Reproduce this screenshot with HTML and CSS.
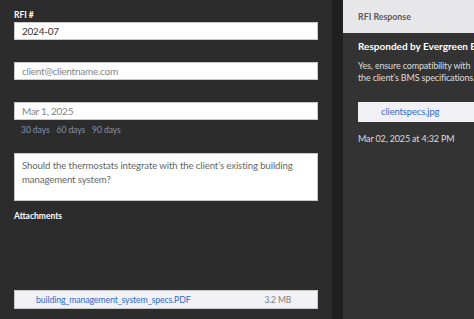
FILE: index.html
```html
<!DOCTYPE html>
<html lang="en">
<head>
  <meta charset="UTF-8" />
  <meta name="viewport" content="width=device-width, initial-scale=1.0" />
  <title>RFI</title>
  <link rel="stylesheet" href="styles.css">
</head>
<body>

  <!-- RFI form -->
  <div class="form-panel">
    <div class="label">RFI #</div>
    <div class="field">2024-07</div>

    <div class="field placeholder gap">client@clientname.com</div>

    <div class="field placeholder gap">Mar 1, 2025</div>
    <div class="days">
      <a>30 days</a>
      <a>60 days</a>
      <a>90 days</a>
    </div>

    <div class="textarea">Should the thermostats integrate with the client’s existing building management system?</div>

    <div class="label attach-label">Attachments</div>

    <div class="file-row">
      <a class="file-link">building_management_system_specs.PDF</a>
      <span class="file-size">3.2 MB</span>
    </div>
  </div>

  <div class="divider"></div>

  <!-- Response -->
  <div class="response-panel">
    <div class="response-head">RFI Response</div>
    <div class="response-body">
      <div class="responder">Responded by Evergreen Electrical</div>
      <p class="answer">Yes, ensure compatibility with<br>the client’s BMS specifications.</p>
      <div class="resp-file"><a>clientspecs.jpg</a></div>
      <div class="stamp">Mar 02, 2025 at 4:32 PM</div>
    </div>
  </div>

</body>
</html>
```

FILE: styles.css
```css
body {
  margin: 0;
  display: flex;
  height: 319px;
  overflow: hidden;
  background: #2c2c2c;
  font-family: Lato, "Open Sans", sans-serif;
}

/* Form side */
.form-panel {
  width: 304px;
  flex: none;
  padding: 10px 14px 0;
  background: #2c2c2c;
}

.label {
  color: #fff;
  font-size: 8.5px;
  font-weight: 700;
  line-height: 11px;
  margin-bottom: 1px;
}

.field {
  height: 18px;
  box-sizing: border-box;
  padding: 0 7px;
  background: #fff;
  border: 1px solid #c9c9c9;
  font-size: 10px;
  letter-spacing: -0.25px;
  line-height: 16px;
  color: #333;
}
.field.placeholder {
  color: #858585;
}
.field.gap {
  margin-top: 22px;
}

.days {
  display: flex;
  gap: 7px;
  padding: 3px 7px 0;
  font-size: 8.6px;
  letter-spacing: -0.1px;
  line-height: 14px;
}
.days a {
  color: #8391ad;
}

.textarea {
  margin-top: 16px;
  height: 48px;
  box-sizing: border-box;
  padding: 5px 7px;
  background: #fff;
  border: 1px solid #c9c9c9;
  font-size: 9.6px;
  letter-spacing: -0.1px;
  line-height: 14px;
  color: #666;
}

.attach-label {
  margin-top: 10px;
}

.file-row {
  margin-top: 68px;
  height: 19px;
  box-sizing: border-box;
  display: flex;
  align-items: center;
  padding: 0 26px 0 21px;
  background: #f1f1f5;
  border: 1px solid #c9c9c9;
  font-size: 8.8px;
  letter-spacing: -0.15px;
}
.file-link {
  flex: 1;
  color: #2f6ad0;
}
.file-size {
  color: #808080;
  font-size: 8.5px;
}

.divider {
  width: 11px;
  flex: none;
  background: #1f1f1f;
}

/* Response side */
.response-panel {
  flex: 1;
  overflow: hidden;
  background: #333;
}
.response-head {
  width: 260px;
  height: 33px;
  box-sizing: border-box;
  padding: 0 15px;
  background: #e7e7e9;
  color: #5a5a5a;
  font-size: 8.8px;
  font-weight: 700;
  line-height: 33px;
}
.response-body {
  width: 260px;
  padding: 6px 15px;
}
.responder {
  color: #fff;
  font-size: 10px;
  font-weight: 700;
  line-height: 14px;
  white-space: nowrap;
}
.answer {
  margin: 7px 0 0;
  color: #ddd;
  font-size: 9px;
  letter-spacing: -0.15px;
  line-height: 12px;
}
.resp-file {
  margin-top: 18px;
  height: 20px;
  padding: 0 23px;
  background: #f1f1f5;
  font-size: 9.4px;
  letter-spacing: -0.1px;
  line-height: 20px;
}
.resp-file a {
  color: #2f6ad0;
}
.stamp {
  margin-top: 11px;
  color: #ddd;
  font-size: 9px;
  letter-spacing: -0.15px;
  line-height: 12px;
}
```
